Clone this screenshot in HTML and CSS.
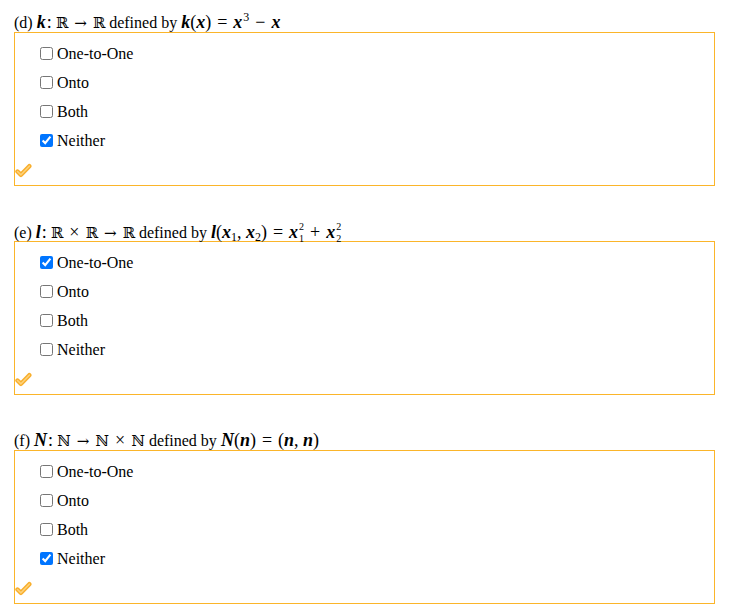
FILE: index.html
```html
<!DOCTYPE html>
<html>
<head>
<meta charset="utf-8">
<link rel="stylesheet" href="styles.css">
</head>
<body>
<div class="page">

  <div class="question">
    <div class="prompt">(d) <span class="m"><i class="mi">k</i><span class="colon">:</span><span class="bb">ℝ</span><span class="arrow">→</span><span class="bb">ℝ</span></span> defined by <span class="m"><i class="mi">k</i><span class="mo">(</span><i class="mi">x</i><span class="mo">)</span><span class="op">=</span><i class="mi">x</i><span class="sup">3</span><span class="op">−</span><i class="mi">x</i></span></div>
    <div class="box">
      <ul class="options">
        <li><input type="checkbox"><span class="label">One-to-One</span></li>
        <li><input type="checkbox"><span class="label">Onto</span></li>
        <li><input type="checkbox"><span class="label">Both</span></li>
        <li><input type="checkbox" checked><span class="label">Neither</span></li>
      </ul>
      <div class="mark"><svg width="17" height="15" viewBox="0 0 17 15"><path d="M2.5 8.5 L6 11.8 L14.3 3.2" fill="none" stroke="#f8ae2c" stroke-width="4.4" stroke-linecap="round" stroke-linejoin="round"/><path d="M2.5 8.5 L6 11.8 L14.3 3.2" fill="none" stroke="#fdd27a" stroke-width="1.6" stroke-linecap="round" stroke-linejoin="round"/></svg></div>
    </div>
  </div>

  <div class="question">
    <div class="prompt">(e) <span class="m"><i class="mi">l</i><span class="colon">:</span><span class="bb">ℝ</span><span class="op">×</span><span class="bb">ℝ</span><span class="arrow">→</span><span class="bb">ℝ</span></span> defined by <span class="m"><i class="mi">l</i><span class="mo">(</span><i class="mi">x</i><span class="sub">1</span><span class="mo">,</span> <i class="mi">x</i><span class="sub">2</span><span class="mo">)</span><span class="op">=</span><i class="mi">x</i><span class="ss"><span class="ss-top">2</span><span class="ss-bot">1</span></span><span class="op">+</span><i class="mi">x</i><span class="ss"><span class="ss-top">2</span><span class="ss-bot">2</span></span></span></div>
    <div class="box">
      <ul class="options">
        <li><input type="checkbox" checked><span class="label">One-to-One</span></li>
        <li><input type="checkbox"><span class="label">Onto</span></li>
        <li><input type="checkbox"><span class="label">Both</span></li>
        <li><input type="checkbox"><span class="label">Neither</span></li>
      </ul>
      <div class="mark"><svg width="17" height="15" viewBox="0 0 17 15"><path d="M2.5 8.5 L6 11.8 L14.3 3.2" fill="none" stroke="#f8ae2c" stroke-width="4.4" stroke-linecap="round" stroke-linejoin="round"/><path d="M2.5 8.5 L6 11.8 L14.3 3.2" fill="none" stroke="#fdd27a" stroke-width="1.6" stroke-linecap="round" stroke-linejoin="round"/></svg></div>
    </div>
  </div>

  <div class="question">
    <div class="prompt">(f) <span class="m"><i class="mi">N</i><span class="colon">:</span><span class="bb">ℕ</span><span class="arrow">→</span><span class="bb">ℕ</span><span class="op">×</span><span class="bb">ℕ</span></span> defined by <span class="m"><i class="mi">N</i><span class="mo">(</span><i class="mi">n</i><span class="mo">)</span><span class="op">=</span><span class="mo">(</span><i class="mi">n</i><span class="mo">,</span> <i class="mi">n</i><span class="mo">)</span></span></div>
    <div class="box">
      <ul class="options">
        <li><input type="checkbox"><span class="label">One-to-One</span></li>
        <li><input type="checkbox"><span class="label">Onto</span></li>
        <li><input type="checkbox"><span class="label">Both</span></li>
        <li><input type="checkbox" checked><span class="label">Neither</span></li>
      </ul>
      <div class="mark"><svg width="17" height="15" viewBox="0 0 17 15"><path d="M2.5 8.5 L6 11.8 L14.3 3.2" fill="none" stroke="#f8ae2c" stroke-width="4.4" stroke-linecap="round" stroke-linejoin="round"/><path d="M2.5 8.5 L6 11.8 L14.3 3.2" fill="none" stroke="#fdd27a" stroke-width="1.6" stroke-linecap="round" stroke-linejoin="round"/></svg></div>
    </div>
  </div>

</div>
</body>
</html>
```

FILE: styles.css
```css
html, body {
  margin: 0;
  padding: 0;
  background: #ffffff;
}

body {
  font-family: "Liberation Serif", "Times New Roman", serif;
  font-size: 16px;
  color: #000000;
}

.page {
  padding: 12px 22px 0 14px;
}

.question {
  margin-bottom: 35px;
}

.prompt {
  height: 20px;
  line-height: 20px;
  white-space: nowrap;
  font-family: "Liberation Serif", "Times New Roman", serif;
}

.m {
  font-family: "Liberation Serif", "DejaVu Serif", serif;
  font-size: 18px;
}

.mi {
  font-style: italic;
  font-weight: bold;
  font-family: "Liberation Serif", serif;
}

.bb {
  font-family: "DejaVu Serif", serif;
  font-size: 15px;
}

.colon {
  margin: 0 4px 0 1px;
}

.op {
  margin: 0 6px;
}

.arrow {
  font-family: "DejaVu Serif", serif;
  font-size: 15px;
  margin: 0 6px;
}

.mo {
  margin: 0;
}

.sup {
  font-size: 12px;
  position: relative;
  top: -7px;
  margin-left: 1px;
}

.sub {
  font-size: 12px;
  position: relative;
  top: 3px;
}

.ss {
  display: inline-flex;
  flex-direction: column;
  vertical-align: 8px;
  font-size: 10px;
  line-height: 12px;
  margin-left: 1px;
}

.ss-top,
.ss-bot {
  display: block;
}

.box {
  border: 1px solid #fbb52a;
  height: 152px;
  display: flex;
  flex-direction: column;
}

.options {
  list-style: none;
  margin: 6px 0 0 25px;
  padding: 0;
  font-family: "Liberation Serif", "Times New Roman", serif;
  font-size: 16px;
}

.options li {
  height: 29px;
  display: flex;
  align-items: center;
}

.options input {
  margin: 0 4px 0 0;
  width: 13px;
  height: 13px;
  flex: none;
}

.label {
  font-family: "Liberation Serif", "Times New Roman", serif;
}

.mark {
  margin: 8px 0 0 0;
  height: 15px;
}

.mark svg {
  display: block;
}
```
